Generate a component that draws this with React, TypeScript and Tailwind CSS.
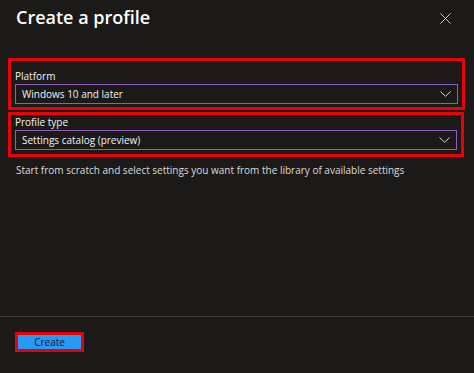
import React from 'react';

const font = { fontFamily: '"Open Sans", "Noto Sans", sans-serif' };

function Chevron() {
  return (
    <svg width="11" height="6" viewBox="0 0 11 6" fill="none" className="shrink-0">
      <path d="M0.5 0.5 L5.5 5.3 L10.5 0.5" stroke="#d6d4d2" strokeWidth="1" />
    </svg>
  );
}

function Select({ value }: { value: string }) {
  return (
    <div className="flex h-[20px] items-center justify-between border border-[#8b5fb8] bg-[#1b1a19] pl-[6px] pr-[6px]">
      <span className="text-[10px] leading-none text-[#f3f2f1]">{value}</span>
      <Chevron />
    </div>
  );
}

export default function App() {
  return (
    <div style={font} className="flex h-[373px] w-[474px] flex-col bg-[#1b1a19] text-[#f3f2f1]">
      {/* Header */}
      <div className="flex items-start justify-between pl-4 pr-[23px] pt-[3px]">
        <h1 className="text-[18px] font-semibold leading-[28px] text-white">Create a profile</h1>
        <button className="mt-[10px]">
          <svg width="11" height="11" viewBox="0 0 11 11" fill="none">
            <path d="M0.5 0.5 L10.5 10.5 M10.5 0.5 L0.5 10.5" stroke="#c8c6c4" strokeWidth="1" />
          </svg>
        </button>
      </div>

      {/* Form */}
      <div className="mt-[27px] flex flex-col gap-[2px] pl-2 pr-[9px]">
        <div className="border-[3px] border-[#e8000b] px-1 pb-[3px] pt-[8px]">
          <label className="block text-[10px] leading-[14px]">Platform</label>
          <div className="mt-[1px]">
            <Select value="Windows 10 and later" />
          </div>
        </div>
        <div className="mr-[1px] border-[3px] border-[#e8000b] px-1 pb-1">
          <label className="block text-[10px] leading-[14px]">Profile type</label>
          <div className="mt-[1px]">
            <Select value="Settings catalog (preview)" />
          </div>
        </div>
        <p className="mt-[4px] pl-2 text-[10px] leading-[14px] text-[#dcdad8]">
          Start from scratch and select settings you want from the library of available settings
        </p>
      </div>

      {/* Footer */}
      <div className="mt-auto border-t border-[#3b3a39] pb-[21px] pl-[15px] pt-[15px]">
        <div className="w-fit border-[3px] border-[#e8000b]">
          <button className="flex h-[14px] w-[63px] items-center justify-center bg-[#2899f5] text-[10px] leading-none text-[#0b1f33]">
            Create
          </button>
        </div>
      </div>
    </div>
  );
}
